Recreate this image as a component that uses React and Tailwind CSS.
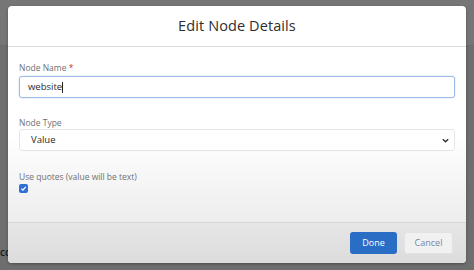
import React from "react";

export default function App() {
  const font = { fontFamily: '"Open Sans", "Noto Sans", sans-serif' };
  return (
    <div className="relative w-[474px] h-[270px] overflow-hidden bg-[#6e6e6e]" style={font}>
      {/* page beneath overlay */}
      <div className="h-[46px] bg-[#767676] border-b border-[#6a6a6a]"></div>
      <div className="absolute left-0 top-[246px] text-[10px] leading-[12px] text-[#1a1a1a] font-semibold">cc</div>

      {/* modal */}
      <div className="absolute left-[8px] top-[6px] w-[458px] h-[257px] rounded-[4px] bg-white flex flex-col overflow-hidden shadow-[0_1px_3px_rgba(0,0,0,0.3)]">
        <div className="h-[41px] shrink-0 flex items-center justify-center border-b border-[#dcdcdc]">
          <span className="text-[14.5px] text-[#2e2e2e] tracking-[0.1px]">Edit Node Details</span>
        </div>
        <div className="flex-1 px-[11px] pt-[15px] bg-gradient-to-b from-white from-50% to-[#ededed]">
          <div className="text-[8.5px] leading-[12px] text-[#707070]">
            Node Name <span className="text-[#c23934]">*</span>
          </div>
          <div className="mt-[2px] h-[22px] rounded-[3px] border border-[#9cbce6] bg-white flex items-center pl-[8px] shadow-[0_0_2px_#c5d9f3]">
            <span className="text-[9.5px] text-[#2a2a2a]">website</span>
            <span className="w-px h-[11px] bg-[#222]"></span>
          </div>
          <div className="mt-[19px] text-[8.5px] leading-[12px] text-[#707070]">Node Type</div>
          <div className="h-[22px] rounded-[3px] border border-[#e6e6e6] bg-white flex items-center justify-between pl-[11px] pr-[4px]">
            <span className="text-[9.5px] text-[#2a2a2a]">Value</span>
            <svg width="9" height="9" viewBox="0 0 10 10">
              <path d="M2 3.5 L5 6.5 L8 3.5" fill="none" stroke="#333" strokeWidth="1.6" />
            </svg>
          </div>
          <div className="mt-[20px] text-[8.5px] leading-[12px] text-[#707070]">Use quotes (value will be text)</div>
          <div className="mt-[1px] w-[9px] h-[9px] rounded-[2px] bg-[#2f6fd6] flex items-center justify-center">
            <svg width="7" height="7" viewBox="0 0 10 10">
              <path d="M2 5.2 L4.2 7.3 L8.2 2.6" fill="none" stroke="white" strokeWidth="1.8" />
            </svg>
          </div>
        </div>
        <div className="h-[41px] shrink-0 border-t border-[#d6d6d6] bg-gradient-to-b from-[#e6e6e6] to-[#dcdcdc] flex items-center justify-end gap-[7px] pr-[13px]">
          <div className="w-[47px] h-[22px] rounded-[3px] bg-[#2a6dc4] flex items-center justify-center text-[9px] text-white">Done</div>
          <div className="w-[49px] h-[22px] rounded-[3px] bg-[#f1f1f1] border border-[#e2e2e2] flex items-center justify-center text-[9px] text-[#7288a8]">Cancel</div>
        </div>
      </div>
    </div>
  );
}
